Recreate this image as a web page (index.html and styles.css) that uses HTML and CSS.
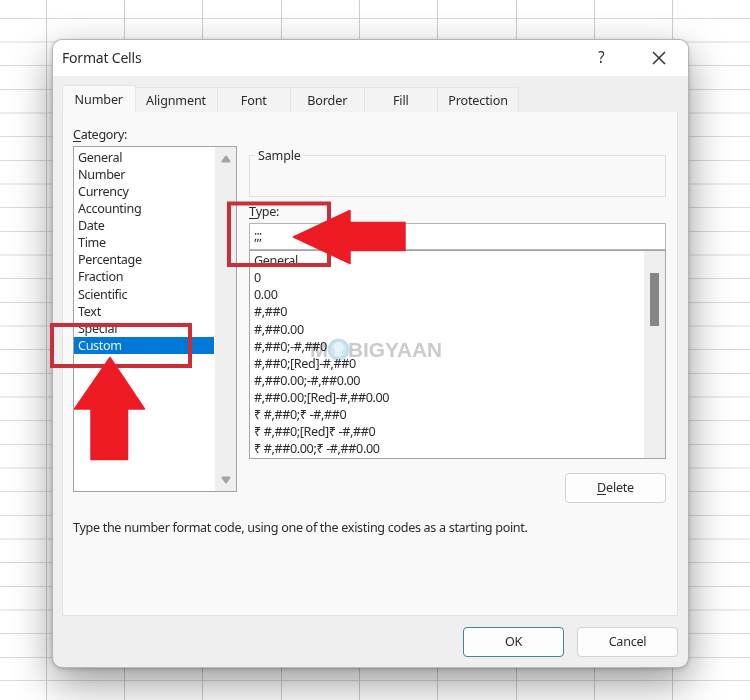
FILE: index.html
```html
<!DOCTYPE html>
<html lang="en">
<head>
<meta charset="utf-8">
<title>Format Cells</title>
<link rel="stylesheet" href="styles.css">
</head>
<body>
<svg class="sheet" width="750" height="700" aria-hidden="true">
  <path class="grid-line" d="M0 18.5H750M0 42H750M0 65.5H750M0 89.5H750M0 113H750M0 136.5H750M0 160.5H750M0 184H750M0 207.5H750M0 231.5H750M0 255H750M0 278.5H750M0 302.5H750M0 326H750M0 349.5H750M0 373.5H750M0 397H750M0 420.5H750M0 444.5H750M0 468H750M0 491.5H750M0 515.5H750M0 539H750M0 562.5H750M0 586.5H750M0 610H750M0 633.5H750M0 657.5H750M0 680.5H750"/>
  <path class="grid-line col" d="M46.5 0V700M124.5 0V700M202.5 0V700M281.5 0V700M359.5 0V700M437.5 0V700M516.5 0V700M594.5 0V700M672.5 0V700"/>
</svg>
<main class="dialog">
  <header class="titlebar">
    <h1 class="title">Format Cells</h1>
    <span class="help">?</span>
    <svg class="close" width="14" height="14" viewBox="0 0 14 14"><path d="M1 1L13 13M13 1L1 13"/></svg>
  </header>
  <nav class="tabs">
    <span class="tab active">Number</span>
    <span class="tab alignment">Alignment</span>
    <span class="tab">Font</span>
    <span class="tab">Border</span>
    <span class="tab">Fill</span>
    <span class="tab protection">Protection</span>
  </nav>
  <section class="panel">
    <div class="columns">
      <div class="category">
        <div class="label"><u>C</u>ategory:</div>
        <div class="listbox">
          <ul class="items">
            <li>General</li><li>Number</li><li>Currency</li><li>Accounting</li><li>Date</li><li>Time</li><li>Percentage</li><li>Fraction</li><li>Scientific</li><li>Text</li><li>Special</li><li class="selected">Custom</li>
          </ul>
          <div class="scroll ends">
            <svg width="10" height="8" viewBox="0 0 10 8"><path d="M4 1.2Q5 0 6 1.2L9.5 6Q9.7 7.5 8.5 7.5H1.5Q.3 7.5 .5 6Z"/></svg>
            <svg width="10" height="8" viewBox="0 0 10 8"><path d="M4 6.8Q5 8 6 6.8L9.5 2Q9.7 .5 8.5 .5H1.5Q.3 .5 .5 2Z"/></svg>
          </div>
        </div>
      </div>
      <div class="details">
        <fieldset class="sample"><legend>Sample</legend></fieldset>
        <div class="label type-label"><u>T</u>ype:</div>
        <div class="input">;;;</div>
        <div class="listbox formats">
          <ul class="items">
            <li>General</li><li>0</li><li>0.00</li><li>#,##0</li><li>#,##0.00</li><li>#,##0;-#,##0</li><li>#,##0;[Red]-#,##0</li><li>#,##0.00;-#,##0.00</li><li>#,##0.00;[Red]-#,##0.00</li><li>₹ #,##0;₹ -#,##0</li><li>₹ #,##0;[Red]₹ -#,##0</li><li>₹ #,##0.00;₹ -#,##0.00</li>
          </ul>
          <div class="scroll"><div class="thumb"></div></div>
        </div>
        <button class="button delete"><span><u>D</u>elete</span></button>
      </div>
    </div>
    <p class="hint">Type the number format code, using one of the existing codes as a starting point.</p>
  </section>
  <footer class="actions">
    <button class="button primary">OK</button>
    <button class="button">Cancel</button>
  </footer>
</main>
<svg class="markup watermark" width="750" height="700" viewBox="0 0 750 700">
  <text x="310" y="356.500" textLength="18" lengthAdjust="spacingAndGlyphs">M</text>
  <circle cx="338.5" cy="349.500" r="9.5"/>
  <path class="bulb" d="M335 356V352Q331.500 346 335.500 343Q338.500 341 341.500 343Q345.500 346 342 352V356Z"/>
  <text x="348" y="356.500" textLength="94" lengthAdjust="spacingAndGlyphs">BIGYAAN</text>
</svg>
<svg class="markup" width="750" height="700" viewBox="0 0 750 700">
  <rect class="frame" x="229" y="203.500" width="100" height="61.500"/>
  <rect class="frame" x="52" y="325" width="138" height="41"/>
  <path class="arrow" d="M293.500 237L350 210.500V222.500H405V250.500H350V263.500Z"/>
  <path class="arrow" d="M110 357.500L144.500 409H127.500V459.500H91V409H74.500Z"/>
</svg>
</body>
</html>
```
FILE: styles.css
```css
* { box-sizing: border-box; }
body {
  margin: 0;
  width: 750px;
  height: 700px;
  overflow: hidden;
  position: relative;
  padding: 40px 0 0 53px;
  background: #fff;
  color: #2b2b2b;
  font: 12.6px/17.14px "Noto Sans", "Open Sans", sans-serif;
  letter-spacing: -.325px;
}
.sheet { position: absolute; left: 0; top: 0; }
.grid-line { stroke: #dadada; fill: none; }
.grid-line.col { stroke: #cecece; }
.dialog {
  position: relative;
  display: flex;
  flex-direction: column;
  width: 635px;
  height: 627px;
  border-radius: 9px;
  background: #efefef;
  box-shadow: 0 0 0 1px #b5b5b5, 0 1px 4px rgba(0,0,0,.3), 0 15px 42px rgba(0,0,0,.42);
}
.titlebar {
  display: flex;
  align-items: center;
  height: 36px;
  padding: 0 22px 0 9px;
  background: #fff;
  border-radius: 9px 9px 0 0;
}
.title { flex: 1; margin: 0; font-size: 14px; font-weight: 400; letter-spacing: -.2px; }
.help { font-size: 16px; margin-right: 47px; transform: scaleX(.9); }
.close { stroke: #333; stroke-width: 1.5; fill: none; }
.tabs { display: flex; align-items: flex-end; height: 36px; padding-left: 9px; }
.tab {
  width: 73.500px;
  height: 25px;
  border: 1px solid #e5e5e5;
  border-width: 1px 1px 0 0;
  background: #f3f3f3;
  line-height: 26px;
  text-align: center;
  letter-spacing: -.15px;
}
.tab.active { height: 27px; background: #f9f9f9; border-left-width: 1px; line-height: 28px; }
.alignment { width: 82px; }
.protection { width: 81px; }
.panel {
  margin: 0 10px 0 9px;
  height: 504px;
  padding: 14px 11px 0 10px;
  border: 1px solid #e3e3e3;
  border-top: 0;
  background: #f9f9f9;
}
.columns { display: flex; gap: 12px; height: 393px; }
.category { width: 164px; }
.label { height: 20px; }
u { text-decoration: none; border-bottom: 1px solid currentColor; display: inline-block; line-height: 13px; }
.listbox { display: flex; border: 1px solid #a3a3a3; background: #fff; height: 346px; }
.items { flex: 1; margin: 0; padding: 1.500px 1px 0 0; list-style: none; }
.items li { padding-left: 4px; height: 17.14px; white-space: nowrap; }
.items .selected { background: #0078d7; color: #e8f4ff; }
.scroll { width: 21px; background: #efefef; }
.ends { display: flex; flex-direction: column; align-items: center; justify-content: space-between; padding: 8px 0 7px; fill: #a3a3a3; }
.details { width: 417px; display: flex; flex-direction: column; padding-top: 21px; }
.sample { margin: 0; height: 50px; padding: 0 0 0 5px; border: 1px solid #dedede; }
.sample legend { padding: 0 3px; line-height: 17px; letter-spacing: -.2px; }
.type-label { margin-top: 6px; height: 20px; }
.input { height: 27px; border: 1px solid #b5b5b5; background: #fff; padding: 3px 4px; letter-spacing: -.9px; }
.formats { height: 209px; }
.formats .items { padding-top: 1px; letter-spacing: -.38px; }
.thumb { margin: 22px 0 0 6px; width: 9px; height: 53px; background: #858585; }
.button {
  width: 101px;
  height: 30px;
  padding: 0;
  border: 1px solid #d2d2d2;
  border-radius: 4px;
  background: #fdfdfd;
  color: inherit;
  font: inherit;
  letter-spacing: -.25px;
}
.delete { align-self: flex-end; margin-top: 14px; }
.hint { margin: 0; }
.actions { display: flex; justify-content: flex-end; gap: 13px; padding: 11px 10px 0; }
.primary { border-color: #3f8498; }
.markup { position: absolute; left: 0; top: 0; }
.watermark { font: 700 20px "Liberation Sans", sans-serif; letter-spacing: 0; fill: #c8cbd0; mix-blend-mode: multiply; }
.watermark circle { fill: #cfe6f3; stroke: #c3deec; stroke-width: 3; }
.watermark .bulb { fill: #e6f3fa; }
.frame { fill: none; stroke: #c92f38; stroke-width: 4; }
.arrow { fill: #ed1c24; stroke: #ed1c24; stroke-width: 1.500; stroke-linejoin: round; }
```
